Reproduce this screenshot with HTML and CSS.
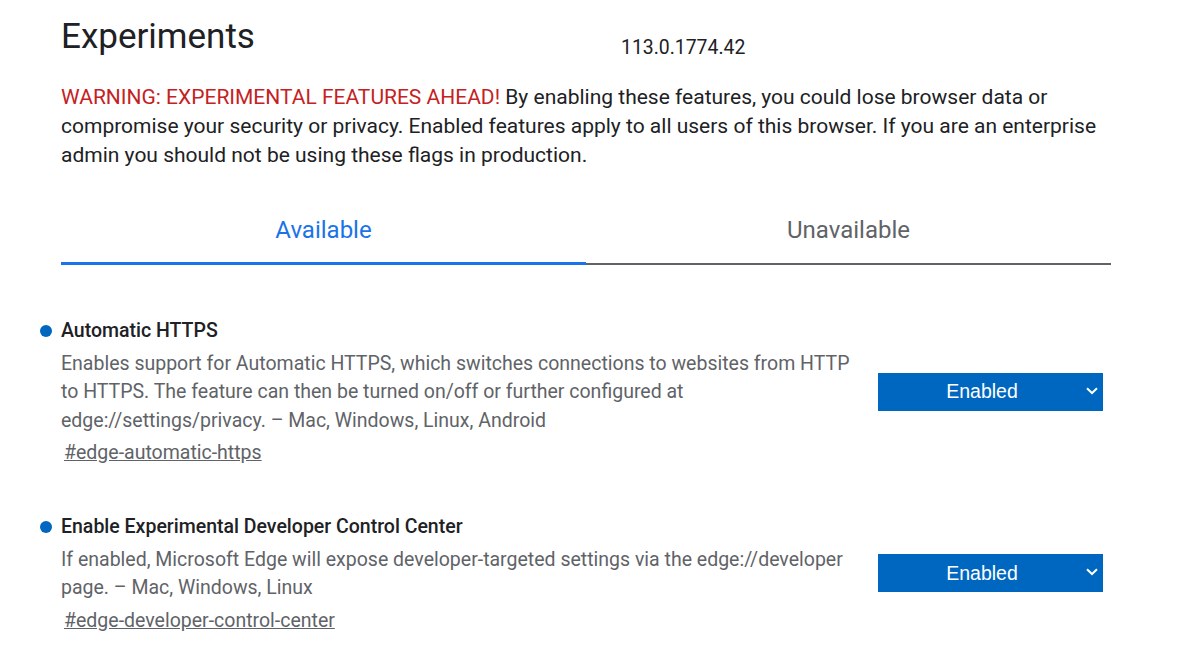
FILE: index.html
```html
<!DOCTYPE html>
<html>
<head>
<meta charset="utf-8">
<link rel="stylesheet" href="styles.css">
</head>
<body>
<div class="page">
  <header class="header">
    <h1 class="title">Experiments</h1>
    <span class="version">113.0.1774.42</span>
  </header>
  <p class="warning"><span class="warn-red">WARNING: EXPERIMENTAL FEATURES AHEAD!</span> By enabling these features, you could lose browser data or compromise your security or privacy. Enabled features apply to all users of this browser. If you are an enterprise admin you should not be using these flags in production.</p>
  <div class="tabs">
    <div class="tab tab-active">Available</div>
    <div class="tab">Unavailable</div>
  </div>
  <div class="experiments">
    <div class="experiment exp-first">
      <div class="exp-text">
        <h3 class="exp-title"><span class="dot"></span>Automatic HTTPS</h3>
        <p class="exp-desc">Enables support for Automatic HTTPS, which switches connections to websites from HTTP to HTTPS. The feature can then be turned on/off or further configured at edge://settings/privacy. – Mac, Windows, Linux, Android</p>
        <a class="exp-link" href="#edge-automatic-https">#edge-automatic-https</a>
      </div>
      <div class="select">
        <span class="select-label">Enabled</span>
        <svg class="chev" width="12" height="8" viewBox="0 0 12 8"><path d="M1 1.2 L6 6 L11 1.2" fill="none" stroke="#fff" stroke-width="2"/></svg>
      </div>
    </div>
    <div class="experiment">
      <div class="exp-text">
        <h3 class="exp-title"><span class="dot"></span>Enable Experimental Developer Control Center</h3>
        <p class="exp-desc">If enabled, Microsoft Edge will expose developer-targeted settings via the edge://developer page. – Mac, Windows, Linux</p>
        <a class="exp-link" href="#edge-developer-control-center">#edge-developer-control-center</a>
      </div>
      <div class="select">
        <span class="select-label">Enabled</span>
        <svg class="chev" width="12" height="8" viewBox="0 0 12 8"><path d="M1 1.2 L6 6 L11 1.2" fill="none" stroke="#fff" stroke-width="2"/></svg>
      </div>
    </div>
  </div>
</div>
</body>
</html>
```
FILE: styles.css
```css
* { box-sizing: border-box; }
html, body { margin: 0; padding: 0; background: #fff; }
body { font-family: Roboto, "Noto Sans", sans-serif; color: #202124; }
.page { width: 1050px; margin-left: 61px; }
.header { display: grid; grid-template-columns: 560px auto; padding-top: 16px; }
.title { margin: 0; font-size: 35px; font-weight: 400; line-height: 42px; color: #202124; }
.version { margin-top: 20px; font-size: 19.4px; line-height: 24px; color: #202124; }
.warning { margin: 23px 0 0; font-size: 21px; line-height: 29px; color: #202124; }
.warn-red { color: #c5221f; }
.tabs { display: flex; padding-top: 45px; }
.tab { flex: 1; text-align: center; font-size: 24px; line-height: 30px; padding-bottom: 18px; color: #5f6368; border-bottom: 2px solid #5f6368; }
.tab-active { color: #1a73e8; border-bottom: 3px solid #1a73e8; padding-bottom: 17px; }
.experiments { padding-top: 54px; }
.experiment { display: flex; align-items: center; gap: 17px; }
.experiment + .experiment { margin-top: 50px; }
.exp-text { width: 800px; display: flex; flex-direction: column; align-items: flex-start; }
.exp-title { margin: 0; font-size: 19.5px; font-weight: 500; line-height: 24px; color: #202124; display: flex; align-items: center; }
.dot { width: 12px; height: 12px; border-radius: 50%; background: #0067c0; margin-left: -21px; margin-right: 9px; flex: none; }
.exp-desc { margin: 6.75px 0 0; font-size: 19.5px; line-height: 28.5px; color: #5f6368; }
.exp-link { margin-top: 5.75px; padding-left: 3px; font-size: 19.5px; line-height: 24px; color: #5f6368; text-decoration: underline; }
.select { width: 225px; height: 38px; background: #0067c0; display: flex; align-items: center; flex: none; margin-top: -1px; }
.select-label { flex: 1; text-align: center; color: #fff; font-family: "Liberation Sans", Arial, sans-serif; font-size: 19.5px; }
.chev { margin-right: 5px; margin-top: -2px; }
```
